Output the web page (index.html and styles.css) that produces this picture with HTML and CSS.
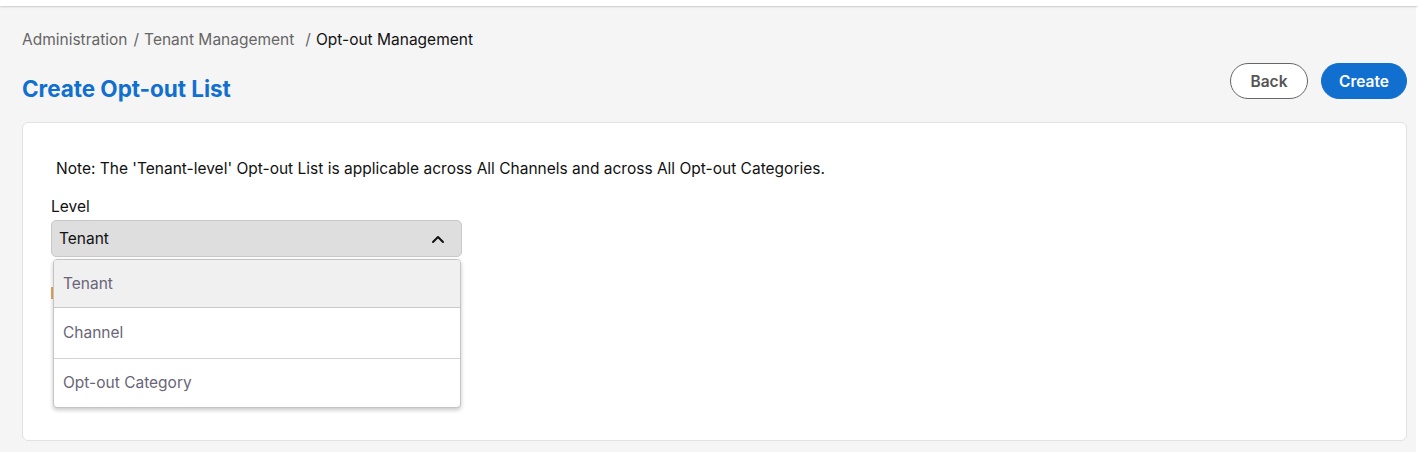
FILE: index.html
```html
<!DOCTYPE html>
<html>
<head>
<meta charset="utf-8">
<link rel="stylesheet" href="styles.css">
</head>
<body>
<div class="topbar"></div>
<main class="page">
  <nav class="crumbs">
    <span class="crumb">Administration</span>
    <span class="sep">/</span>
    <span class="crumb">Tenant Management</span>
    <span class="sep sep-wide">/</span>
    <span class="crumb current">Opt-out Management</span>
  </nav>
  <div class="header">
    <h1 class="title">Create Opt-out List</h1>
    <div class="actions">
      <button class="btn btn-back">Back</button>
      <button class="btn btn-create">Create</button>
    </div>
  </div>
  <section class="card">
    <p class="note">Note: The 'Tenant-level' Opt-out List is applicable across All Channels and across All Opt-out Categories.</p>
    <label class="label">Level</label>
    <div class="select-wrap">
      <div class="select">
        <span>Tenant</span>
        <svg class="chev" width="14" height="10" viewBox="0 0 14 10"><path d="M2 8 L7 3 L12 8" fill="none" stroke="#111" stroke-width="2" stroke-linecap="round" stroke-linejoin="round"/></svg>
      </div>
      <div class="under"><span class="mark"></span></div>
      <ul class="menu">
        <li class="opt active">Tenant</li>
        <li class="opt">Channel</li>
        <li class="opt">Opt-out Category</li>
      </ul>
    </div>
  </section>
</main>
</body>
</html>
```
FILE: styles.css
```css
* { box-sizing: border-box; }
html, body { margin: 0; padding: 0; background: #fff; }
body { font-family: Inter, "Noto Sans", sans-serif; color: #111; }
.topbar { height: 6px; background: #fff; box-shadow: 0 1px 2px rgba(0,0,0,0.18); position: relative; z-index: 1; }
.page { background: #f5f5f5; height: 446px; padding: 22px 9px 0 22px; border-right: 2px solid #fff; }
.crumbs { font-size: 15.5px; color: #666; display: flex; align-items: center; height: 23px; }
.sep { margin: 0 5px 0 6px; }
.sep-wide { margin-left: 11px; }
.crumb.current { color: #111; }
.header { display: flex; justify-content: space-between; align-items: flex-start; margin-top: 11px; }
.title { margin: 13px 0 0; font-size: 22.5px; font-weight: 700; color: #1170cf; letter-spacing: -0.05px; }
.actions { display: flex; gap: 13px; margin-top: 1px; }
.btn { font-family: Inter, "Noto Sans", sans-serif; font-size: 15.5px; font-weight: 600; height: 36px; border-radius: 18px; cursor: pointer; }
.btn-back { width: 78px; background: #fff; border: 1px solid #666; color: #555; }
.btn-create { width: 86px; background: #1170cf; border: 1px solid #1170cf; color: #fff; }
.card { margin-top: 20px; background: #fff; border: 1px solid #e2e2e2; border-radius: 6px; height: 319px; padding: 35px 28px 0 28px; }
.note { margin: 0 0 0 5px; font-size: 15.5px; line-height: 22px; color: #111; }
.label { display: block; margin-top: 17px; font-size: 15.5px; line-height: 20px; color: #111; }
.select-wrap { position: relative; width: 411px; margin-top: 3px; }
.select { height: 37px; background: #dedede; border: 1px solid #c8c8c8; border-radius: 5px; display: flex; align-items: center; justify-content: space-between; padding: 0 16px 0 7px; font-size: 15.5px; color: #111; }
.chev { margin-top: 1px; }
.under { height: 60px; position: relative; }
.mark { position: absolute; left: 0; top: 30px; width: 2px; height: 12px; background: #e8a860; }
.menu { position: absolute; left: 2px; top: 39px; width: 408px; margin: 0; padding: 0; list-style: none; background: #fff; border: 1px solid #c4c4c4; border-radius: 4px; box-shadow: 0 2px 4px rgba(0,0,0,0.22); overflow: hidden; }
.opt { height: 49.5px; display: flex; align-items: center; padding-left: 9px; font-size: 15.5px; color: #6a6478; border-top: 1px solid #d4d4d4; }
.opt:first-child { border-top: none; height: 48px; }
.opt.active { background: #f0f0f0; border-bottom: 1px solid #c8c8c8; }
.opt.active + .opt { border-top: none; }
```
